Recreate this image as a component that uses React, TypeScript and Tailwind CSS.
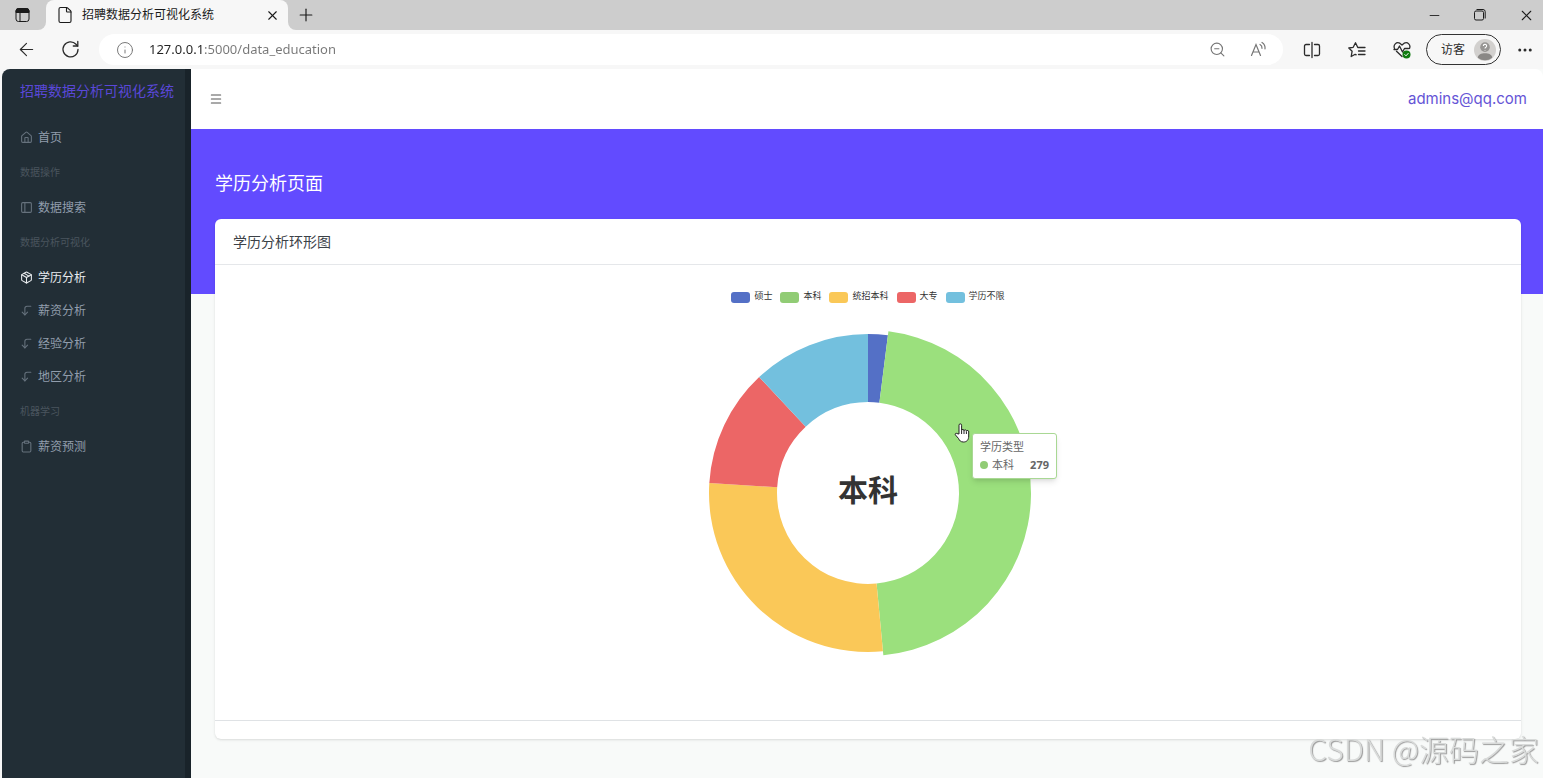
import {
  ArrowLeft,
  Clipboard,
  CornerLeftDown,
  Ellipsis,
  File,
  House,
  Info,
  Menu,
  Minus,
  Package,
  PanelLeft,
  Plus,
  X,
  ZoomOut,
} from "lucide-react";

const slices = [
  { name: "硕士", value: 12, color: "#5470c6", swatch: "bg-[#5470c6]" },
  { name: "本科", value: 279, color: "#9be07d", swatch: "bg-[#91cc75]" },
  { name: "统招本科", value: 165, color: "#fac858", swatch: "bg-[#fac858]" },
  { name: "大专", value: 72, color: "#ec6666", swatch: "bg-[#ec6666]" },
  { name: "学历不限", value: 72, color: "#73c0de", swatch: "bg-[#73c0de]" },
];

const active = slices[1];

const menu = [
  { items: [{ name: "首页", icon: House }] },
  { title: "数据操作", items: [{ name: "数据搜索", icon: PanelLeft }] },
  {
    title: "数据分析可视化",
    items: [
      { name: "学历分析", icon: Package, active: true },
      { name: "薪资分析", icon: CornerLeftDown },
      { name: "经验分析", icon: CornerLeftDown },
      { name: "地区分析", icon: CornerLeftDown },
    ],
  },
  { title: "机器学习", items: [{ name: "薪资预测", icon: Clipboard }] },
];

const point = (angle: number, r: number) =>
  `${164 + r * Math.sin(angle)} ${164 - r * Math.cos(angle)}`;

const ringPath = (from: number, to: number, outer: number) => {
  const inner = 91;
  const large = to - from > Math.PI ? 1 : 0;
  return `M${point(from, outer)} A${outer} ${outer} 0 ${large} 1 ${point(to, outer)} L${point(to, inner)} A${inner} ${inner} 0 ${large} 0 ${point(from, inner)} Z`;
};

const TabStrip = () => {
  return (
    <div className="flex h-[30px] bg-[#cdcdcd] text-[#1b1b1b]">
      <div className="bg-[#f7f7f7]">
        <button
          aria-label="标签页操作"
          className="flex h-full w-[46px] items-center justify-center rounded-br-lg bg-[#cdcdcd]"
        >
          <svg width="16" height="16" viewBox="0 0 16 16" fill="none" stroke="currentColor">
            <rect x="1" y="1.5" width="13" height="13" rx="2.5" />
            <path d="M1 5V4a2.5 2.5 0 0 1 2.5-2.5h8A2.5 2.5 0 0 1 14 4v1.500H1z" fill="currentColor" />
            <path d="M5 5v9.5" />
          </svg>
        </button>
      </div>
      <div className="flex w-[242px] items-center rounded-t-lg bg-[#f7f7f7] pr-2 pl-[10px]">
        <File size={18} strokeWidth={1.5} />
        <span className="ml-2 flex-1 text-xs">招聘数据分析可视化系统</span>
        <button aria-label="关闭标签页">
          <X size={15} strokeWidth={1.8} />
        </button>
      </div>
      <div className="flex-1 bg-[#f7f7f7]">
        <div className="flex h-full items-center justify-between rounded-bl-lg bg-[#cdcdcd] pr-2 pl-2">
          <button aria-label="新建标签页">
            <Plus size={20} strokeWidth={1.4} />
          </button>
          <div className="flex items-center gap-[31px]">
            <button aria-label="最小化">
              <Minus size={15} strokeWidth={1.4} />
            </button>
            <button aria-label="还原">
              <svg width="14" height="14" viewBox="0 0 14 14" fill="none" stroke="currentColor">
                <rect x="1.5" y="3" width="9" height="9" rx="1.5" />
                <path d="M3.500 1.500h6.500a2.200 2.200 0 0 1 2.200 2.200v6.800" />
              </svg>
            </button>
            <button aria-label="关闭">
              <X size={17} strokeWidth={1.5} />
            </button>
          </div>
        </div>
      </div>
    </div>
  );
};

const Toolbar = () => {
  return (
    <div className="flex h-[39px] items-center bg-[#f7f7f7] pr-[9px] pl-4 text-[#2b2b2b]">
      <button aria-label="后退">
        <ArrowLeft size={21} strokeWidth={1.3} />
      </button>
      <button aria-label="刷新" className="ml-6">
        <svg width="19" height="19" viewBox="0 0 19 19" fill="none" stroke="currentColor" strokeWidth="1.3" strokeLinecap="round">
          <path d="M17 9.500a7.500 7.500 0 1 1-2-5.200L16.500 6" />
          <path d="M16.800 1.500V6h-4.500" />
        </svg>
      </button>
      <div className="ml-[19px] flex h-[31px] flex-1 items-center rounded-full bg-white pr-4 pl-[17px] text-[#767676]">
        <Info size={18} strokeWidth={1.3} />
        <input
          aria-label="地址"
          readOnly
          value="127.0.0.1:5000/data_education"
          className="ml-[15px] flex-1 bg-[linear-gradient(90deg,#222_55px,#777_55px)] bg-clip-text font-['Noto_Sans'] text-[13px] text-transparent outline-none"
        />
        <button aria-label="缩小">
          <ZoomOut size={17} strokeWidth={1.6} />
        </button>
        <button aria-label="朗读此页" className="ml-6">
          <svg width="17" height="18" viewBox="0 0 17 18" fill="none" stroke="currentColor" strokeWidth="1.2" strokeLinecap="round">
            <path d="M1.500 14.500L6 3.500l4.500 11M3 11h6" />
            <path d="M10 3.500a4 4 0 0 1 2 3.800M12 1.500a6.500 6.500 0 0 1 3 6.300" />
          </svg>
        </button>
      </div>
      <div className="ml-5 flex items-center gap-[27px]">
        <button aria-label="分屏">
          <svg width="18" height="18" viewBox="0 0 18 18" fill="none" stroke="currentColor" strokeWidth="1.3" strokeLinecap="round">
            <path d="M6.500 3.500H3A1.500 1.500 0 0 0 1.500 5v8A1.500 1.500 0 0 0 3 14.500h3.500M9 1.500v15M11.500 3.500H15A1.500 1.500 0 0 1 16.500 5v8a1.500 1.500 0 0 1-1.500 1.500h-3.500" />
          </svg>
        </button>
        <button aria-label="收藏夹">
          <svg width="18" height="18" viewBox="0 0 18 18" fill="none" stroke="currentColor" strokeWidth="1.3" strokeLinecap="round" strokeLinejoin="round">
            <path d="M10.500 6.500H9.800L7.500 1.800 5.200 6.300l-4.400.7 3.300 3.300-.9 5.200 4-2.200 1 .5" />
            <path d="M11 6.500h6M10.500 10h6.500M10.500 13.500h6.500" />
          </svg>
        </button>
        <button aria-label="浏览器概要">
          <svg width="18" height="18" viewBox="0 0 18 18" fill="none" stroke="currentColor" strokeWidth="1.3" strokeLinecap="round" strokeLinejoin="round">
            <path d="M1.500 7.500C0 4 3.300.5 6.800 2.200L9 4l2.200-1.800C14.700.5 18 4 16.500 7.500M9 15.500l-5.500-5.300" />
            <path d="M1 8.500h3.500L6.500 5l3 6 2-3.500h4" />
            <circle cx="13.500" cy="13.500" r="4" fill="#0f7b0f" stroke="none" />
            <path d="M11.800 13.600l1.200 1.200 2.200-2.400" stroke="#fff" strokeWidth="1" />
          </svg>
        </button>
      </div>
      <button className="ml-[15px] flex h-[31px] w-[75px] items-center justify-between rounded-full border border-[#333] pr-1 pl-[14px] text-xs">
        访客
        <svg width="22" height="22" viewBox="0 0 23 23">
          <circle cx="11.500" cy="11.500" r="11.500" fill="#d2d0ce" />
          <path d="M4 19.500c0-6 15-6 15 0a11.500 11.500 0 0 1-15 0z" fill="#8a8886" />
          <circle cx="11.500" cy="8.500" r="5" fill="#979593" />
          <path d="M9.800 7.300a1.700 1.700 0 1 1 2.600 1.400c-.7.400-.9.700-.9 1.300M11.500 11.400v.6" fill="none" stroke="#fff" strokeWidth="1.200" />
        </svg>
      </button>
      <button aria-label="设置及其他" className="ml-[15px]">
        <Ellipsis size={18} strokeWidth={2} />
      </button>
    </div>
  );
};

const Sidebar = () => {
  return (
    <aside className="ml-[2px] w-[189px] shrink-0 rounded-tl-lg border-r-[6px] border-[#19232a] bg-[#222e36]">
      <a href="#home" className="flex h-11 items-center pl-[18px] text-sm whitespace-nowrap text-[#5a48d8]">
        招聘数据分析可视化系统
      </a>
      <nav className="pt-2">
        {menu.map((group) => (
          <div key={group.items[0].name}>
            {group.title && (
              <h2 className="flex h-[37px] items-center pl-[18px] text-[10px] text-[#4a555e]">{group.title}</h2>
            )}
            {group.items.map((item) => (
              <a
                key={item.name}
                href="#page"
                className={
                  item.active
                    ? "flex h-[33px] items-center gap-[5px] pl-[18px] text-xs text-[#e9ecef]"
                    : "flex h-[33px] items-center gap-[5px] pl-[18px] text-xs text-[#919dac]"
                }
              >
                <item.icon
                  size={13}
                  strokeWidth={2}
                  className={item.active ? "text-[#e9ecef]" : "text-[#66727d]"}
                />
                {item.name}
              </a>
            ))}
          </div>
        ))}
      </nav>
    </aside>
  );
};

const Donut = () => {
  const total = slices.reduce((sum, s) => sum + s.value, 0);
  let angle = 0;
  return (
    <div className="relative mt-6">
      <svg width="328" height="328" viewBox="0 0 328 328" role="img" aria-label="学历分析环形图">
        {slices.map((s) => {
          const from = angle;
          angle += (s.value / total) * Math.PI * 2;
          return <path key={s.name} d={ringPath(from, angle, s === active ? 163 : 159)} fill={s.color} />;
        })}
        <text x="164" y="172" textAnchor="middle" fontSize="30" fontWeight="700" fill="#333">
          {active.name}
        </text>
      </svg>
      <div className="absolute top-[104px] left-[268px] w-[85px] rounded-[3px] border border-[#a9d894] bg-white px-[7px] py-1 text-[11px] leading-[18px] text-[#666] shadow-md">
        <p>学历类型</p>
        <p className="flex items-center">
          <span className="mr-1 h-2 w-2 rounded-full bg-[#91cc75]" />
          {active.name}
          <b className="ml-auto font-['Noto_Sans']">{active.value}</b>
        </p>
      </div>
      {/* hand cursor over the active slice */}
      <svg
        className="absolute top-[94px] left-[250px]"
        width="16"
        height="20"
        viewBox="0 0 16 20"
        fill="#fff"
        stroke="#222"
        strokeLinejoin="round"
      >
        <path d="M5 11V2.200a1.300 1.300 0 0 1 2.600 0V7.500a1.200 1.200 0 0 1 2.400.300 1.200 1.200 0 0 1 2.400.500 1.200 1.200 0 0 1 2.300.700V13c0 4-2 6-5.200 6-3 0-4-1.500-5-3.500L1.300 11.800c-.6-1.200.8-2 1.700-1.200z" />
        <path d="M7.600 7.500V11M10 8v3M12.400 8.500V11" />
      </svg>
    </div>
  );
};

const App = () => {
  return (
    <div className="flex min-h-screen flex-col overflow-hidden bg-[#f7f7f7] font-['Liberation_Sans','Noto_Sans_CJK_SC',sans-serif]">
      <TabStrip />
      <Toolbar />
      <div className="flex flex-1">
        <Sidebar />
        <main className="flex min-w-0 flex-1 flex-col bg-[#f8faf9]">
          <header className="flex h-[60px] items-center justify-between rounded-tr-lg bg-white pr-4 pl-[18px]">
            <button aria-label="菜单" className="text-[#555]">
              <Menu size={14} strokeWidth={1.8} />
            </button>
            <a href="#user" className="font-['Inter'] text-[15px] text-[#6554d6]">
              admins@qq.com
            </a>
          </header>
          <section className="flex-1 bg-[linear-gradient(#624bff_165px,transparent_165px)] pt-10 pr-[22px] pb-9 pl-6">
            <h1 className="mb-5 text-lg leading-[30px] text-white">学历分析页面</h1>
            <div className="rounded-md bg-white shadow">
              <h2 className="flex h-[46px] items-center border-b border-[#e5e7ea] px-[18px] text-sm text-[#3c4248]">
                学历分析环形图
              </h2>
              <div className="flex flex-col items-center pt-6 pb-[63px]">
                <ul className="flex h-4 items-center gap-2 text-[9px] text-[#333]">
                  {slices.map((s) => (
                    <li key={s.name} className="flex items-center gap-1">
                      <span className={`h-[11px] w-[19px] rounded-[3px] ${s.swatch}`} />
                      {s.name}
                    </li>
                  ))}
                </ul>
                <Donut />
              </div>
              <div className="h-[19px] border-t border-[#dfe2e5]" />
            </div>
          </section>
        </main>
      </div>
      <p className="pointer-events-none fixed right-1 bottom-3 font-['Noto_Sans_CJK_SC'] text-3xl font-light text-[#d9dbda] [text-shadow:1px_1px_1px_#999]">
        CSDN @源码之家
      </p>
    </div>
  );
};

export default App;
